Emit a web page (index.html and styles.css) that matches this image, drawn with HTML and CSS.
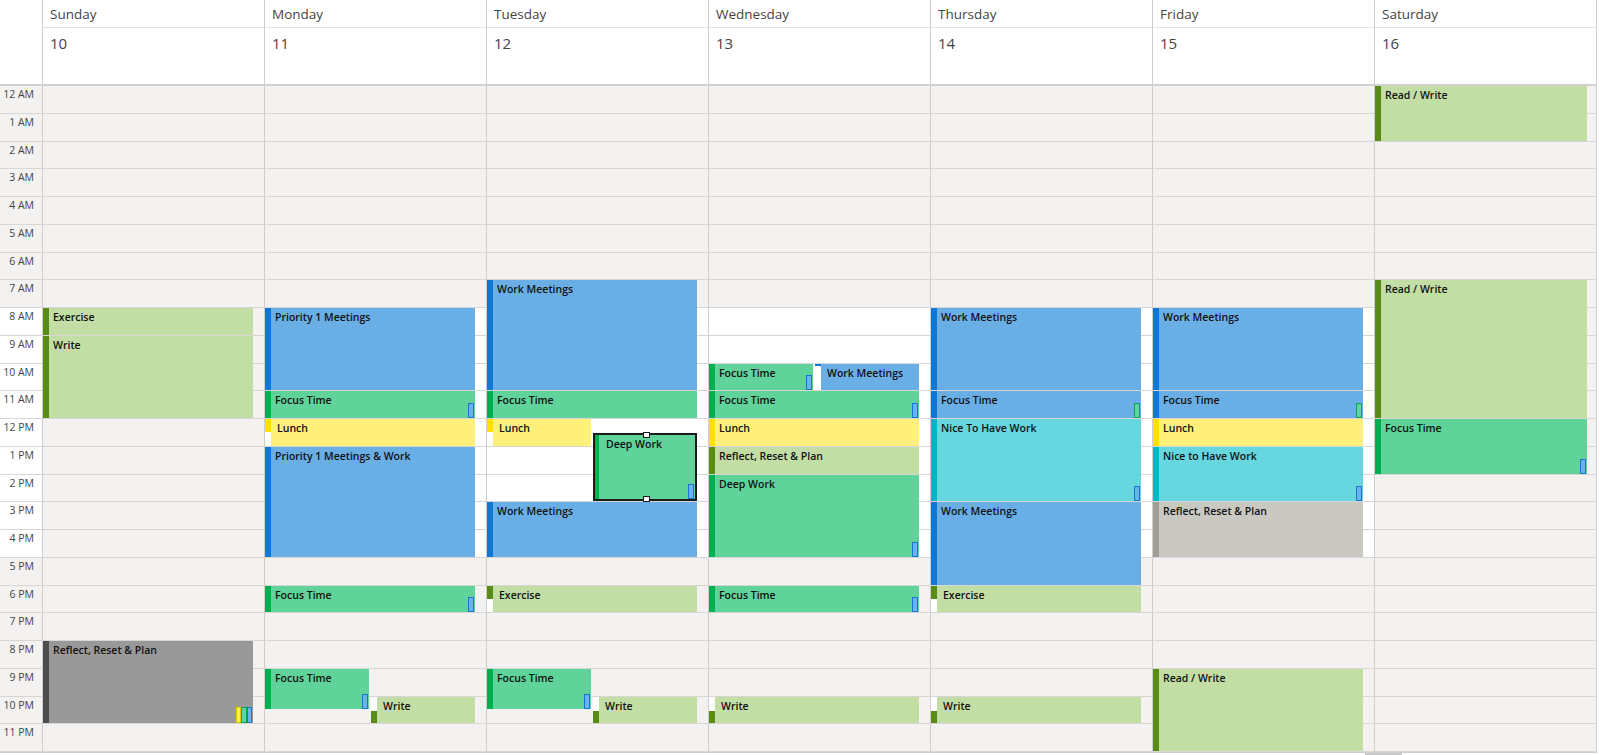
FILE: index.html
```html
<!DOCTYPE html>
<html>
<head>
<meta charset="utf-8">
<link rel="stylesheet" href="styles.css">
</head>
<body>
<div class="cal">
  <div class="head">
    <div class="gh"></div>
    <div class="dayh"><div class="dname">Sunday</div><div class="dnum">10</div></div>
    <div class="dayh"><div class="dname">Monday</div><div class="dnum">11</div></div>
    <div class="dayh"><div class="dname">Tuesday</div><div class="dnum">12</div></div>
    <div class="dayh"><div class="dname">Wednesday</div><div class="dnum">13</div></div>
    <div class="dayh"><div class="dname">Thursday</div><div class="dnum">14</div></div>
    <div class="dayh"><div class="dname">Friday</div><div class="dnum">15</div></div>
    <div class="dayh"><div class="dname">Saturday</div><div class="dnum">16</div></div>
  </div>
  <div class="body">
    <div class="times">
      <div class="tl">12 AM</div><div class="tl">1 AM</div><div class="tl">2 AM</div><div class="tl">3 AM</div>
      <div class="tl">4 AM</div><div class="tl">5 AM</div><div class="tl">6 AM</div><div class="tl">7 AM</div>
      <div class="tl w">8 AM</div><div class="tl w">9 AM</div><div class="tl w">10 AM</div><div class="tl w">11 AM</div>
      <div class="tl w">12 PM</div><div class="tl w">1 PM</div><div class="tl w">2 PM</div><div class="tl w">3 PM</div>
      <div class="tl w">4 PM</div><div class="tl">5 PM</div><div class="tl">6 PM</div><div class="tl">7 PM</div>
      <div class="tl">8 PM</div><div class="tl">9 PM</div><div class="tl">10 PM</div><div class="tl">11 PM</div>
    </div>

    <!-- Sunday -->
    <div class="day">
      <div class="bg">
        <div class="hr"></div><div class="hr"></div><div class="hr"></div><div class="hr"></div><div class="hr"></div><div class="hr"></div><div class="hr"></div><div class="hr"></div>
        <div class="hr"></div><div class="hr"></div><div class="hr"></div><div class="hr"></div><div class="hr"></div><div class="hr"></div><div class="hr"></div><div class="hr"></div>
        <div class="hr"></div><div class="hr"></div><div class="hr"></div><div class="hr"></div><div class="hr"></div><div class="hr"></div><div class="hr"></div><div class="hr"></div>
      </div>
      <div class="ev lgreen full" style="grid-row:17/19"><i class="bar"></i><div class="fill"><span class="ttl">Exercise</span></div></div>
      <div class="ev lgreen full" style="grid-row:19/25"><i class="bar"></i><div class="fill"><span class="ttl">Write</span></div></div>
      <div class="ev dgray full" style="grid-row:41/47"><i class="bar"></i><div class="fill"><span class="ttl">Reflect, Reset &amp; Plan</span><div class="inds"><i class="ind y"></i><i class="ind g"></i><i class="ind"></i></div></div></div>
    </div>

    <!-- Monday -->
    <div class="day">
      <div class="bg">
        <div class="hr"></div><div class="hr"></div><div class="hr"></div><div class="hr"></div><div class="hr"></div><div class="hr"></div><div class="hr"></div><div class="hr"></div>
        <div class="hr w"></div><div class="hr w"></div><div class="hr w"></div><div class="hr w"></div><div class="hr w"></div><div class="hr w"></div><div class="hr w"></div><div class="hr w"></div>
        <div class="hr w"></div><div class="hr"></div><div class="hr"></div><div class="hr"></div><div class="hr"></div><div class="hr"></div><div class="hr"></div><div class="hr"></div>
      </div>
      <div class="ev blue full" style="grid-row:17/23"><i class="bar"></i><div class="fill"><span class="ttl">Priority 1 Meetings</span></div></div>
      <div class="ev green full" style="grid-row:23/25"><i class="bar"></i><div class="fill"><span class="ttl">Focus Time</span><div class="inds"><i class="ind"></i></div></div></div>
      <div class="ev yellow full free" style="grid-row:25/27"><i class="bar top"></i><div class="fill"><span class="ttl">Lunch</span></div></div>
      <div class="ev blue full" style="grid-row:27/35"><i class="bar"></i><div class="fill"><span class="ttl">Priority 1 Meetings &amp; Work</span></div></div>
      <div class="ev green full" style="grid-row:37/39"><i class="bar"></i><div class="fill"><span class="ttl">Focus Time</span><div class="inds"><i class="ind"></i></div></div></div>
      <div class="ev green l" style="grid-row:43/46"><i class="bar"></i><div class="fill"><span class="ttl">Focus Time</span><div class="inds"><i class="ind"></i></div></div></div>
      <div class="ev lgreen r free" style="grid-row:45/47"><i class="bar bot"></i><div class="fill"><span class="ttl">Write</span></div></div>
    </div>

    <!-- Tuesday -->
    <div class="day">
      <div class="bg">
        <div class="hr"></div><div class="hr"></div><div class="hr"></div><div class="hr"></div><div class="hr"></div><div class="hr"></div><div class="hr"></div><div class="hr"></div>
        <div class="hr w"></div><div class="hr w"></div><div class="hr w"></div><div class="hr w"></div><div class="hr w"></div><div class="hr w"></div><div class="hr w"></div><div class="hr w"></div>
        <div class="hr w"></div><div class="hr"></div><div class="hr"></div><div class="hr"></div><div class="hr"></div><div class="hr"></div><div class="hr"></div><div class="hr"></div>
      </div>
      <div class="ev blue full" style="grid-row:15/23"><i class="bar"></i><div class="fill"><span class="ttl">Work Meetings</span></div></div>
      <div class="ev green full" style="grid-row:23/25"><i class="bar"></i><div class="fill"><span class="ttl">Focus Time</span></div></div>
      <div class="ev yellow l free" style="grid-row:25/27"><i class="bar top"></i><div class="fill"><span class="ttl">Lunch</span></div></div>
      <div class="ev green r sel" style="grid-row:26/31"><i class="bar"></i><div class="fill"><span class="ttl">Deep Work</span><div class="inds"><i class="ind"></i></div></div></div>
      <div class="ev blue full" style="grid-row:31/35"><i class="bar"></i><div class="fill"><span class="ttl">Work Meetings</span></div></div>
      <div class="ev lgreen full free" style="grid-row:37/39"><i class="bar top"></i><div class="fill"><span class="ttl">Exercise</span></div></div>
      <div class="ev green l" style="grid-row:43/46"><i class="bar"></i><div class="fill"><span class="ttl">Focus Time</span><div class="inds"><i class="ind"></i></div></div></div>
      <div class="ev lgreen r free" style="grid-row:45/47"><i class="bar bot"></i><div class="fill"><span class="ttl">Write</span></div></div>
    </div>

    <!-- Wednesday -->
    <div class="day">
      <div class="bg">
        <div class="hr"></div><div class="hr"></div><div class="hr"></div><div class="hr"></div><div class="hr"></div><div class="hr"></div><div class="hr"></div><div class="hr"></div>
        <div class="hr w"></div><div class="hr w"></div><div class="hr w"></div><div class="hr w"></div><div class="hr w"></div><div class="hr w"></div><div class="hr w"></div><div class="hr w"></div>
        <div class="hr w"></div><div class="hr"></div><div class="hr"></div><div class="hr"></div><div class="hr"></div><div class="hr"></div><div class="hr"></div><div class="hr"></div>
      </div>
      <div class="ev green l" style="grid-row:21/23"><i class="bar"></i><div class="fill"><span class="ttl">Focus Time</span><div class="inds"><i class="ind"></i></div></div></div>
      <div class="ev blue r free" style="grid-row:21/23"><i class="bar tip"></i><div class="fill"><span class="ttl">Work Meetings</span></div></div>
      <div class="ev green full" style="grid-row:23/25"><i class="bar"></i><div class="fill"><span class="ttl">Focus Time</span><div class="inds"><i class="ind"></i></div></div></div>
      <div class="ev yellow full" style="grid-row:25/27"><i class="bar"></i><div class="fill"><span class="ttl">Lunch</span></div></div>
      <div class="ev lgreen full" style="grid-row:27/29"><i class="bar"></i><div class="fill"><span class="ttl">Reflect, Reset &amp; Plan</span></div></div>
      <div class="ev green full" style="grid-row:29/35"><i class="bar"></i><div class="fill"><span class="ttl">Deep Work</span><div class="inds"><i class="ind"></i></div></div></div>
      <div class="ev green full" style="grid-row:37/39"><i class="bar"></i><div class="fill"><span class="ttl">Focus Time</span><div class="inds"><i class="ind"></i></div></div></div>
      <div class="ev lgreen full free" style="grid-row:45/47"><i class="bar bot"></i><div class="fill"><span class="ttl">Write</span></div></div>
    </div>

    <!-- Thursday -->
    <div class="day">
      <div class="bg">
        <div class="hr"></div><div class="hr"></div><div class="hr"></div><div class="hr"></div><div class="hr"></div><div class="hr"></div><div class="hr"></div><div class="hr"></div>
        <div class="hr w"></div><div class="hr w"></div><div class="hr w"></div><div class="hr w"></div><div class="hr w"></div><div class="hr w"></div><div class="hr w"></div><div class="hr w"></div>
        <div class="hr w"></div><div class="hr"></div><div class="hr"></div><div class="hr"></div><div class="hr"></div><div class="hr"></div><div class="hr"></div><div class="hr"></div>
      </div>
      <div class="ev blue full" style="grid-row:17/23"><i class="bar"></i><div class="fill"><span class="ttl">Work Meetings</span></div></div>
      <div class="ev blue full" style="grid-row:23/25"><i class="bar"></i><div class="fill"><span class="ttl">Focus Time</span><div class="inds"><i class="ind g"></i></div></div></div>
      <div class="ev cyan full" style="grid-row:25/31"><i class="bar"></i><div class="fill"><span class="ttl">Nice To Have Work</span><div class="inds"><i class="ind"></i></div></div></div>
      <div class="ev blue full" style="grid-row:31/37"><i class="bar"></i><div class="fill"><span class="ttl">Work Meetings</span></div></div>
      <div class="ev lgreen full free" style="grid-row:37/39"><i class="bar top"></i><div class="fill"><span class="ttl">Exercise</span></div></div>
      <div class="ev lgreen full free" style="grid-row:45/47"><i class="bar bot"></i><div class="fill"><span class="ttl">Write</span></div></div>
    </div>

    <!-- Friday -->
    <div class="day">
      <div class="bg">
        <div class="hr"></div><div class="hr"></div><div class="hr"></div><div class="hr"></div><div class="hr"></div><div class="hr"></div><div class="hr"></div><div class="hr"></div>
        <div class="hr w"></div><div class="hr w"></div><div class="hr w"></div><div class="hr w"></div><div class="hr w"></div><div class="hr w"></div><div class="hr w"></div><div class="hr w"></div>
        <div class="hr w"></div><div class="hr"></div><div class="hr"></div><div class="hr"></div><div class="hr"></div><div class="hr"></div><div class="hr"></div><div class="hr"></div>
      </div>
      <div class="ev blue full" style="grid-row:17/23"><i class="bar"></i><div class="fill"><span class="ttl">Work Meetings</span></div></div>
      <div class="ev blue full" style="grid-row:23/25"><i class="bar"></i><div class="fill"><span class="ttl">Focus Time</span><div class="inds"><i class="ind g"></i></div></div></div>
      <div class="ev yellow full" style="grid-row:25/27"><i class="bar"></i><div class="fill"><span class="ttl">Lunch</span></div></div>
      <div class="ev cyan full" style="grid-row:27/31"><i class="bar"></i><div class="fill"><span class="ttl">Nice to Have Work</span><div class="inds"><i class="ind"></i></div></div></div>
      <div class="ev beige full" style="grid-row:31/35"><i class="bar"></i><div class="fill"><span class="ttl">Reflect, Reset &amp; Plan</span></div></div>
      <div class="ev lgreen full" style="grid-row:43/49"><i class="bar"></i><div class="fill"><span class="ttl">Read / Write</span></div></div>
    </div>

    <!-- Saturday -->
    <div class="day sat">
      <div class="bg">
        <div class="hr"></div><div class="hr"></div><div class="hr"></div><div class="hr"></div><div class="hr"></div><div class="hr"></div><div class="hr"></div><div class="hr"></div>
        <div class="hr"></div><div class="hr"></div><div class="hr"></div><div class="hr"></div><div class="hr"></div><div class="hr"></div><div class="hr"></div><div class="hr"></div>
        <div class="hr"></div><div class="hr"></div><div class="hr"></div><div class="hr"></div><div class="hr"></div><div class="hr"></div><div class="hr"></div><div class="hr"></div>
      </div>
      <div class="ev lgreen full" style="grid-row:1/5"><i class="bar"></i><div class="fill"><span class="ttl">Read / Write</span></div></div>
      <div class="ev lgreen full" style="grid-row:15/25"><i class="bar"></i><div class="fill"><span class="ttl">Read / Write</span></div></div>
      <div class="ev green full" style="grid-row:25/29"><i class="bar"></i><div class="fill"><span class="ttl">Focus Time</span><div class="inds"><i class="ind"></i></div></div></div>
    </div>
  </div>
  <div class="foot"><div class="thumb"></div></div>
</div>
</body>
</html>
```

FILE: styles.css
```css
* { box-sizing: border-box; }
html, body { margin: 0; padding: 0; background: #fff; }
body {
  font-family: "Open Sans", "Noto Sans", sans-serif;
  width: 1600px;
  height: 755px;
  overflow: hidden;
}
.cal { width: 1597px; }

.head {
  display: grid;
  grid-template-columns: 42px repeat(7, 222px);
  height: 86px;
  border-bottom: 2px solid #d4d2d0;
  border-right: 1px solid #d0cecc;
}
.dayh {
  border-left: 1px solid #d0cecc;
  display: flex;
  flex-direction: column;
}
.dname {
  height: 28px;
  line-height: 27px;
  padding-top: 1px;
  border-bottom: 1px solid #e6e4e2;
  padding-left: 7px;
  font-size: 13.5px;
  color: #444;
}
.dnum {
  padding: 5px 0 0 7px;
  font-size: 15px;
  line-height: 20px;
  color: #444;
}

.body {
  display: grid;
  grid-template-columns: 42px repeat(7, 222px);
  grid-template-rows: 666px;
  height: 666px;
  border-right: 1px solid #d0cecc;
}
.times {
  display: flex;
  flex-direction: column;
  min-height: 0;
}
.tl {
  flex: 1 1 0;
  min-height: 0;
  border-bottom: 1px solid #d8d6d4;
  background: #f3f2f1;
  text-align: right;
  padding: 1px 8px 0 0;
  font-size: 10.5px;
  line-height: 14px;
  color: #444;
}
.tl.w { background: #fff; }

.day {
  border-left: 1px solid #d0cecc;
  min-height: 0;
  display: grid;
  grid-template-columns: 104px 2px 104px 11px;
  grid-template-rows: repeat(48, minmax(0, 1fr));
}
.day.sat { grid-template-columns: 104px 2px 106px 9px; }
.bg {
  grid-area: 1 / 1 / -1 / -1;
  display: flex;
  flex-direction: column;
  min-height: 0;
}
.hr {
  flex: 1 1 0;
  min-height: 0;
  background: #f3f2f1;
  border-bottom: 1px solid #d8d6d4;
}
.hr.w { background: #fff; }

.full { grid-column: 1 / 4; }
.l { grid-column: 1 / 2; }
.r { grid-column: 3 / 4; }

.ev {
  display: flex;
  margin-bottom: 1px;
  min-height: 0;
  position: relative;
}
.bar {
  display: block;
  width: 6px;
  flex: none;
  background: var(--bar);
}
.fill {
  flex: 1;
  min-width: 0;
  min-height: 0;
  background: var(--fill);
  display: grid;
  grid-template-columns: minmax(0, 1fr);
  grid-template-rows: minmax(0, 1fr);
  padding: 2px 1px 0 4px;
}
.ttl {
  grid-area: 1 / 1;
  align-self: start;
  font-size: 10.5px;
  font-weight: 600;
  line-height: 14px;
  color: #111;
  white-space: nowrap;
  overflow: hidden;
}
.free .fill { padding-left: 6px; }
.bar.top { background: linear-gradient(var(--bar) 0 13px, #fff 13px); }
.bar.bot { background: linear-gradient(#fff 0 14px, var(--bar) 14px); }
.bar.tip { background: linear-gradient(var(--bar) 0 2px, #fff 2px); }

.inds {
  grid-area: 1 / 1;
  align-self: end;
  justify-self: end;
  display: flex;
}
.ind {
  display: block;
  width: 6px;
  height: 15px;
  border: 1px solid #1677cf;
  background: #6cb3ea;
}
.ind.g { border-color: #08a552; background: #62d49b; }
.ind.y { border-color: #e3c600; background: #fff04e; }
.dgray .ind { width: 5.5px; height: 16px; }

.blue   { --bar: #0f78d4; --fill: #69afe6; }
.green  { --bar: #00b050; --fill: #5fd399; }
.lgreen { --bar: #588c14; --fill: #c2dea5; }
.yellow { --bar: #ffe100; --fill: #fff07b; }
.cyan   { --bar: #00b8c4; --fill: #66d6df; }
.beige  { --bar: #9e9e96; --fill: #c9c9c1; }
.dgray  { --bar: #4d4d4d; --fill: #999999; }

.sel { border: 2px solid #1b1b1b; }
.sel .bar { width: 4px; }
.sel .fill { padding-left: 7px; }
.sel::before,
.sel::after {
  content: "";
  position: absolute;
  left: 50%;
  width: 5px;
  height: 4px;
  margin-left: -2px;
  background: #fff;
  border: 1px solid #1b1b1b;
}
.sel::before { top: -3px; }
.sel::after { bottom: -3px; }

.foot {
  height: 3px;
  border-top: 1px solid #d0cecc;
  display: flex;
  padding-left: 1365px;
}
.thumb { width: 37px; background: #c8c8c8; }
```
